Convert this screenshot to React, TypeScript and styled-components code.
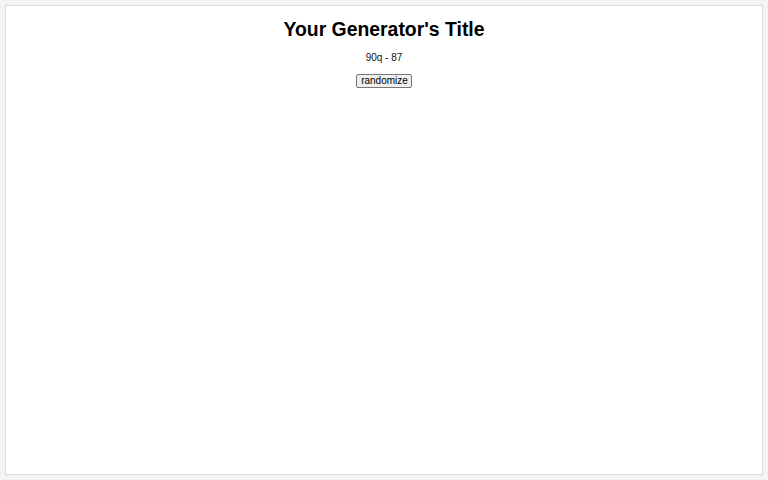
import { useState } from "react"
import styled, { createGlobalStyle } from "styled-components"

const GlobalStyle = createGlobalStyle`
  html, body {
    margin: 0;
    padding: 0;
    background: #f4f4f4;
    font-family: "Liberation Sans", Arial, sans-serif;
  }
`

const Page = styled.div`
  box-sizing: border-box;
  height: 480px;
  padding: 5px;
`

const Sheet = styled.div`
  box-sizing: border-box;
  height: 470px;
  background: #ffffff;
  border: 1px solid #dddddd;
  display: flex;
  flex-direction: column;
  align-items: center;
  padding-top: 12px;
`

const Title = styled.h1`
  margin: 0;
  font-size: 19.4px;
  line-height: 22px;
  font-weight: bold;
  color: #000;
`

const Result = styled.div`
  margin-top: 12px;
  font-size: 10px;
  line-height: 12px;
  color: #111;
`

const RandomButton = styled.button`
  margin-top: 10px;
  font-family: "Liberation Sans", Arial, sans-serif;
  font-size: 10px;
  line-height: 12px;
  padding: 0 3px 0 4px;
  background: #efefef;
  border: 1px solid #767676;
  border-radius: 2px;
  color: #000;
`

const App = () => {
  const [value, setValue] = useState("90q - 87")

  const randomize = () => {
    const n = Math.floor(Math.random() * 100)
    const m = Math.floor(Math.random() * 100)
    setValue(`${n}q - ${m}`)
  }

  return (
    <>
      <GlobalStyle />
      <Page>
        <Sheet>
          <Title>Your Generator's Title</Title>
          <Result>{value}</Result>
          <RandomButton onClick={randomize}>randomize</RandomButton>
        </Sheet>
      </Page>
    </>
  )
}

export default App
